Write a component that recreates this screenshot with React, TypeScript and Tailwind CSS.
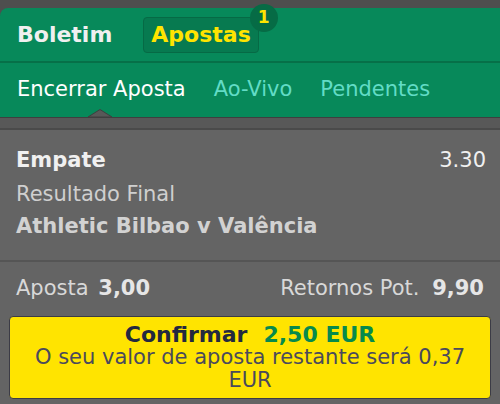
import React from 'react';

const font = { fontFamily: '"DejaVu Sans", Verdana, sans-serif' };

export default function App() {
  return (
    <div className="w-[500px] h-[404px] bg-[#4e4e4e] pt-[8px] overflow-hidden" style={font}>
      <div className="bg-[#07895a] rounded-tl-[8px]">
        <div className="h-[55px] flex items-center px-[17px] gap-[31px] border-b-[2px] border-[#067048]">
          <span className="text-[22px] font-bold text-[#f0f0f0]">Boletim</span>
          <div className="relative">
            <div className="h-[36px] px-[7px] flex items-center rounded-[4px] bg-[#077a50] border border-[#066a45]">
              <span className="text-[22px] font-bold text-[#ffe400]">Apostas</span>
            </div>
            <div className="absolute -top-[13px] -right-[19px] w-[28px] h-[28px] rounded-full bg-[#066b45] flex items-center justify-center">
              <span className="text-[17px] font-bold text-[#ffe400]">1</span>
            </div>
          </div>
        </div>
        <div className="relative h-[54px] flex items-center px-[17px] gap-[28px] text-[21px]">
          <span className="text-white">Encerrar Aposta</span>
          <span className="text-[#62dcc6]">Ao-Vivo</span>
          <span className="text-[#62dcc6]">Pendentes</span>
          <svg className="absolute left-[88px] bottom-0" width="24" height="8" viewBox="0 0 24 8">
            <path d="M0 8 L12 0.5 L24 8 Z" fill="#585858" stroke="#3f3f3f" strokeWidth="1" />
          </svg>
        </div>
      </div>
      <div className="h-[13px] bg-[#585858] border-t border-[#3f3f3f] border-b-[2px] border-b-[#4a4a4a]"></div>
      <div className="bg-[#646464] px-[16px] pt-[15px] pb-[17px] border-b-[2px] border-[#555]">
        <div className="flex justify-between items-baseline">
          <span className="text-[21px] font-bold text-[#f0f0f0]">Empate</span>
          <span className="text-[21px] text-[#f0f0f0] -mr-[2px]">3.30</span>
        </div>
        <div className="text-[21px] text-[#cfcfcf] mt-[2px]">Resultado Final</div>
        <div className="text-[21px] font-bold text-[#d2d2d2] mt-[1px]">Athletic Bilbao v Valência</div>
      </div>
      <div className="bg-[#646464] h-[200px] px-[9px]">
        <div className="h-[54px] flex items-center justify-between px-[7px] text-[21px]">
          <span className="text-[#d8d8d8]">
            Aposta <span className="font-bold text-[#e6e6e6] ml-[3px]">3,00</span>
          </span>
          <span className="text-[#d8d8d8]">
            Retornos Pot. <span className="font-bold text-[#e6e6e6] ml-[6px]">9,90</span>
          </span>
        </div>
        <div className="bg-[#ffe400] border border-[#3c3c46] rounded-[4px] h-[83px] flex flex-col items-center justify-center text-center leading-[23px] px-[16px]">
          <div className="text-[22px] font-bold">
            <span className="text-[#23293f]">Confirmar</span>
            <span className="text-[#078a4c] ml-[16px]">2,50 EUR</span>
          </div>
          <div className="text-[21px] text-[#4a4a5c]">O seu valor de aposta restante será 0,37 EUR</div>
        </div>
      </div>
    </div>
  );
}
